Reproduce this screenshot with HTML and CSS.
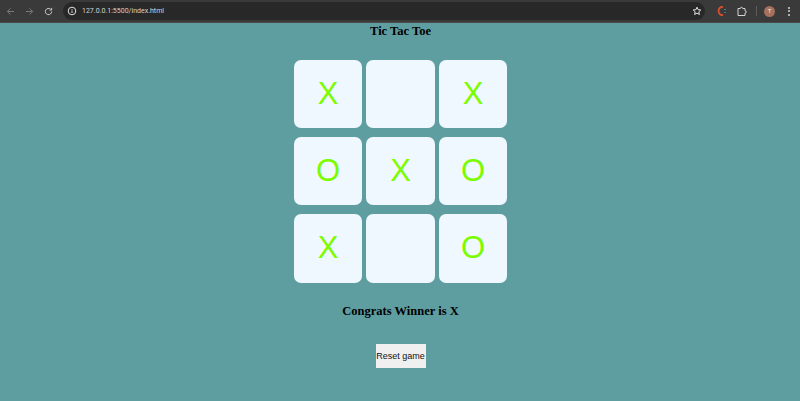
FILE: index.html
```html
<!DOCTYPE html>
<html lang="en">
<head>
    <meta charset="UTF-8">
    <meta name="viewport" content="width=device-width, initial-scale=1.0">
    <title>Tic Tac Toe</title>
    <link rel="stylesheet" href="styles.css">
</head>
<body>
    <div class="toolbar">
        <svg class="nav-icon dim" viewBox="0 0 10 10"><path d="M9 5H1.5M5 1.5 1.5 5 5 8.5"/></svg>
        <svg class="nav-icon dim" viewBox="0 0 10 10"><path d="M1 5h7.5M5 1.5 8.5 5 5 8.5"/></svg>
        <svg class="nav-icon" viewBox="0 0 10 10"><path d="M8.5 5A3.5 3.5 0 1 1 7.4 2.5M8.5 1v2.4H6.1"/></svg>
        <div class="address">
            <svg class="info-icon" viewBox="0 0 10 10"><circle cx="5" cy="5" r="3.8"/><path d="M5 4.6v2.4M5 3v.8"/></svg>
            <span class="url">127.0.0.1:5500/index.html</span>
            <svg class="star-icon" viewBox="0 0 10 10"><path d="M5 1.2 6.1 3.7 8.8 4 6.8 5.8 7.4 8.5 5 7.1 2.6 8.5 3.2 5.8 1.2 4 3.9 3.7Z"/></svg>
        </div>
        <div class="tools">
            <svg class="ext-c" viewBox="0 0 10 12"><path class="ext-red" d="M6 2.2A3.4 4 0 1 0 6 9.8"/><path class="ext-blue" d="M8 4v1M8 7v1"/></svg>
            <svg class="puzzle" viewBox="0 0 12 12"><path d="M2 3.5h2.3a1.2 1.2 0 0 1 2.4 0H9v2.2a1.2 1.2 0 0 1 0 2.4V10.500H2Z"/></svg>
            <span class="divider"></span>
            <span class="avatar">T</span>
            <span class="menu"><i></i><i></i><i></i></span>
        </div>
    </div>

    <div class="game">
        <h1 class="title">Tic Tac Toe</h1>
        <div class="board">
            <button class="cell">X</button>
            <button class="cell"></button>
            <button class="cell">X</button>
            <button class="cell">O</button>
            <button class="cell">X</button>
            <button class="cell">O</button>
            <button class="cell">X</button>
            <button class="cell"></button>
            <button class="cell">O</button>
        </div>
        <h2 class="message">Congrats Winner is X</h2>
        <button class="reset">Reset game</button>
    </div>
</body>
</html>
```

FILE: styles.css
```css
* {
    margin: 0;
    padding: 0;
    box-sizing: border-box;
}

body {
    height: 401px;
    overflow: hidden;
    background-color: cadetblue;
}

.toolbar {
    display: flex;
    align-items: center;
    height: 23px;
    padding-left: 6px;
    background-color: #3a3a3a;
    border-bottom: 1px solid #4a4a4a;
}

.nav-icon {
    width: 9px;
    height: 9px;
    margin-right: 10px;
    fill: none;
    stroke: #c8c8c8;
    stroke-width: 1.1;
}

.nav-icon.dim {
    stroke: #7a7a7a;
}

.address {
    display: flex;
    align-items: center;
    flex: 1;
    height: 18px;
    padding: 0 3px 0 4px;
    background-color: #282828;
    border-radius: 9px;
}

.info-icon {
    width: 10px;
    height: 10px;
    fill: none;
    stroke: #e0e0e0;
    stroke-width: 1;
}

.url {
    flex: 1;
    margin-left: 5px;
    font-family: "Roboto", sans-serif;
    font-size: 7px;
    color: #d4d4d4;
}

.star-icon {
    width: 10px;
    height: 10px;
    fill: none;
    stroke: #e4e4e4;
    stroke-width: 1;
}

.tools {
    display: flex;
    align-items: center;
    width: 95px;
    padding-left: 12px;
}

.ext-c {
    width: 10px;
    height: 12px;
    fill: none;
    stroke-width: 1.8;
}

.ext-red {
    stroke: #d8502e;
}

.ext-blue {
    stroke: #4a7f9a;
}

.puzzle {
    width: 12px;
    height: 12px;
    margin-left: 9px;
    fill: none;
    stroke: #d4d4d4;
    stroke-width: 1;
}

.divider {
    width: 1px;
    height: 10px;
    margin-left: 8px;
    background-color: #5c5c5c;
}

.avatar {
    width: 11px;
    height: 11px;
    margin-left: 7px;
    border-radius: 50%;
    background-color: #a5705c;
    color: #f2e6df;
    font-family: "Liberation Sans", sans-serif;
    font-size: 6px;
    line-height: 11px;
    text-align: center;
}

.menu {
    display: flex;
    flex-direction: column;
    gap: 1.5px;
    margin-left: 13px;
}

.menu i {
    width: 2px;
    height: 2px;
    border-radius: 50%;
    background-color: #d4d4d4;
}

.game {
    display: flex;
    flex-direction: column;
    align-items: center;
    padding-left: 1px;
}

.title {
    height: 36.750px;
    padding-top: 1px;
    font-family: "Liberation Serif", serif;
    font-size: 12.500px;
    line-height: 15px;
    color: #000;
}

.board {
    display: grid;
    grid-template-columns: repeat(3, 68.250px);
    grid-auto-rows: 68.250px;
    column-gap: 4.250px;
    row-gap: 9px;
}

.cell {
    border: none;
    border-radius: 7px;
    background-color: aliceblue;
    color: lawngreen;
    font-family: "Liberation Sans", sans-serif;
    font-size: 31px;
}

.message {
    margin-top: 21px;
    font-family: "Liberation Serif", serif;
    font-size: 12.500px;
    line-height: 15px;
    color: #000;
}

.reset {
    width: 50px;
    height: 24px;
    margin-top: 25px;
    border: none;
    background-color: #f0f0f0;
    color: #111;
    font-family: "Liberation Sans", sans-serif;
    font-size: 9px;
    white-space: nowrap;
}
```
